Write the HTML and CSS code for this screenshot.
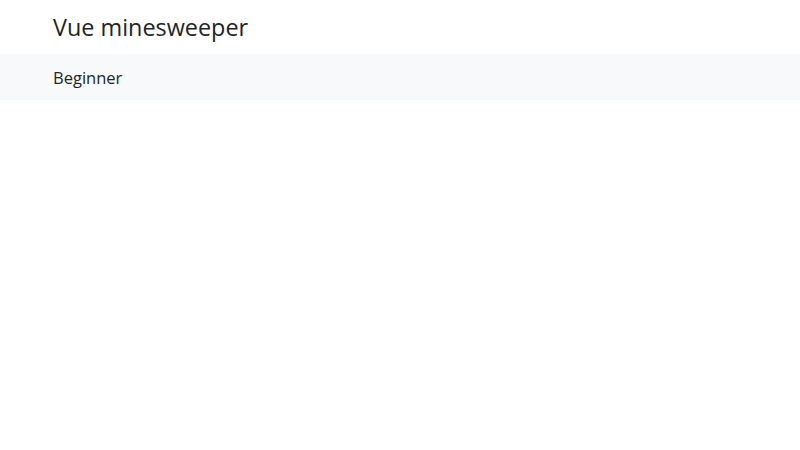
FILE: index.html
```html
<!DOCTYPE html>
<html lang="en">
<head>
<meta charset="utf-8">
<title>Vue minesweeper</title>
<link rel="stylesheet" href="styles.css">
</head>
<body>
<header class="header">
  <h1 class="title">Vue minesweeper</h1>
</header>
<nav class="levels">
  <span class="level">Beginner</span>
</nav>
</body>
</html>
```
FILE: styles.css
```css
html, body {
  margin: 0;
  padding: 0;
  background: #ffffff;
  color: #212529;
  font-family: "Open Sans", "Noto Sans", sans-serif;
}
.header {
  height: 54px;
  padding: 0 53px;
  display: flex;
  align-items: center;
}
.title {
  margin: 0;
  font-size: 23.4px;
  font-weight: 400;
  line-height: 1.2;
}
.levels {
  height: 46px;
  background: #f8f9fa;
  padding: 0 53px;
  display: flex;
  align-items: center;
}
.level {
  font-size: 16.5px;
}
```
